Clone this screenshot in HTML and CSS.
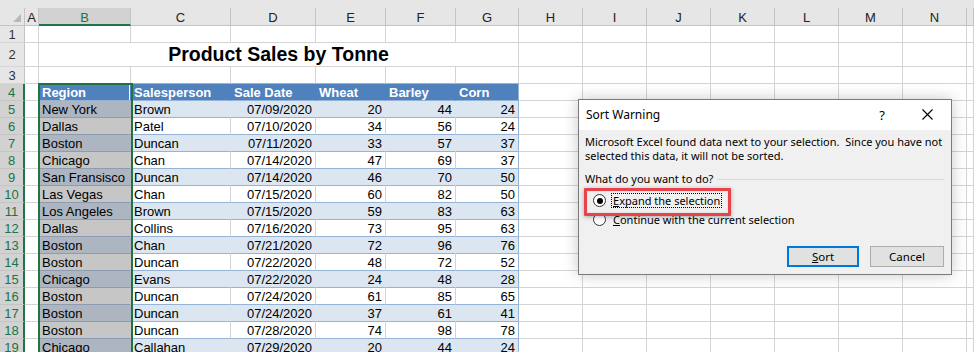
FILE: index.html
```html
<!DOCTYPE html>
<html>
<head>
<meta charset="utf-8">
<link rel="stylesheet" href="styles.css">
</head>
<body>
<div class="sheet">
  <div class="topstrip"></div>
  <div class="row hdr">
    <div class="cell corner"><span class="tri"></span></div>
    <div class="cell">A</div>
    <div class="cell hsel">B</div>
    <div class="cell">C</div>
    <div class="cell">D</div>
    <div class="cell">E</div>
    <div class="cell">F</div>
    <div class="cell">G</div>
    <div class="cell">H</div>
    <div class="cell">I</div>
    <div class="cell">J</div>
    <div class="cell">K</div>
    <div class="cell">L</div>
    <div class="cell">M</div>
    <div class="cell">N</div>
    <div class="cell"></div>
  </div>
  <div class="row">
    <div class="cell rh">1</div>
    <div class="cell"></div><div class="cell"></div><div class="cell"></div><div class="cell"></div><div class="cell"></div><div class="cell"></div><div class="cell"></div><div class="cell"></div><div class="cell"></div><div class="cell"></div><div class="cell"></div><div class="cell"></div><div class="cell"></div><div class="cell"></div><div class="cell"></div>
  </div>
  <div class="row tall">
    <div class="cell rh">2</div>
    <div class="cell"></div>
    <div class="cell title">Product Sales by Tonne</div>
    <div class="cell"></div><div class="cell"></div><div class="cell"></div><div class="cell"></div><div class="cell"></div><div class="cell"></div><div class="cell"></div><div class="cell"></div>
  </div>
  <div class="row">
    <div class="cell rh">3</div>
    <div class="cell"></div><div class="cell abv"></div><div class="cell abv"></div><div class="cell abv"></div><div class="cell abv"></div><div class="cell abv"></div><div class="cell abv"></div><div class="cell"></div><div class="cell"></div><div class="cell"></div><div class="cell"></div><div class="cell"></div><div class="cell"></div><div class="cell"></div><div class="cell"></div>
  </div>
  <div class="row">
    <div class="cell rh sel">4</div>
    <div class="cell"></div>
    <div class="cell th active">Region</div>
    <div class="cell th">Salesperson</div>
    <div class="cell th">Sale Date</div>
    <div class="cell th">Wheat</div>
    <div class="cell th">Barley</div>
    <div class="cell th last">Corn</div>
    <div class="cell"></div><div class="cell"></div><div class="cell"></div><div class="cell"></div><div class="cell"></div><div class="cell"></div><div class="cell"></div><div class="cell"></div>
  </div>
  <div class="row">
    <div class="cell rh sel">5</div><div class="cell"></div>
    <div class="cell selb">New York</div><div class="cell band">Brown</div><div class="cell band num">07/09/2020</div><div class="cell band num">20</div><div class="cell band num">44</div><div class="cell band num last">24</div>
    <div class="cell"></div><div class="cell"></div><div class="cell"></div><div class="cell"></div><div class="cell"></div><div class="cell"></div><div class="cell"></div><div class="cell"></div>
  </div>
  <div class="row">
    <div class="cell rh sel">6</div><div class="cell"></div>
    <div class="cell selw">Dallas</div><div class="cell plain">Patel</div><div class="cell plain num">07/10/2020</div><div class="cell plain num">34</div><div class="cell plain num">56</div><div class="cell plain num last">24</div>
    <div class="cell"></div><div class="cell"></div><div class="cell"></div><div class="cell"></div><div class="cell"></div><div class="cell"></div><div class="cell"></div><div class="cell"></div>
  </div>
  <div class="row">
    <div class="cell rh sel">7</div><div class="cell"></div>
    <div class="cell selb">Boston</div><div class="cell band">Duncan</div><div class="cell band num">07/11/2020</div><div class="cell band num">33</div><div class="cell band num">57</div><div class="cell band num last">37</div>
    <div class="cell"></div><div class="cell"></div><div class="cell"></div><div class="cell"></div><div class="cell"></div><div class="cell"></div><div class="cell"></div><div class="cell"></div>
  </div>
  <div class="row">
    <div class="cell rh sel">8</div><div class="cell"></div>
    <div class="cell selw">Chicago</div><div class="cell plain">Chan</div><div class="cell plain num">07/14/2020</div><div class="cell plain num">47</div><div class="cell plain num">69</div><div class="cell plain num last">37</div>
    <div class="cell"></div><div class="cell"></div><div class="cell"></div><div class="cell"></div><div class="cell"></div><div class="cell"></div><div class="cell"></div><div class="cell"></div>
  </div>
  <div class="row">
    <div class="cell rh sel">9</div><div class="cell"></div>
    <div class="cell selb">San Fransisco</div><div class="cell band">Duncan</div><div class="cell band num">07/14/2020</div><div class="cell band num">46</div><div class="cell band num">70</div><div class="cell band num last">50</div>
    <div class="cell"></div><div class="cell"></div><div class="cell"></div><div class="cell"></div><div class="cell"></div><div class="cell"></div><div class="cell"></div><div class="cell"></div>
  </div>
  <div class="row">
    <div class="cell rh sel">10</div><div class="cell"></div>
    <div class="cell selw">Las Vegas</div><div class="cell plain">Chan</div><div class="cell plain num">07/15/2020</div><div class="cell plain num">60</div><div class="cell plain num">82</div><div class="cell plain num last">50</div>
    <div class="cell"></div><div class="cell"></div><div class="cell"></div><div class="cell"></div><div class="cell"></div><div class="cell"></div><div class="cell"></div><div class="cell"></div>
  </div>
  <div class="row">
    <div class="cell rh sel">11</div><div class="cell"></div>
    <div class="cell selb">Los Angeles</div><div class="cell band">Brown</div><div class="cell band num">07/15/2020</div><div class="cell band num">59</div><div class="cell band num">83</div><div class="cell band num last">63</div>
    <div class="cell"></div><div class="cell"></div><div class="cell"></div><div class="cell"></div><div class="cell"></div><div class="cell"></div><div class="cell"></div><div class="cell"></div>
  </div>
  <div class="row">
    <div class="cell rh sel">12</div><div class="cell"></div>
    <div class="cell selw">Dallas</div><div class="cell plain">Collins</div><div class="cell plain num">07/16/2020</div><div class="cell plain num">73</div><div class="cell plain num">95</div><div class="cell plain num last">63</div>
    <div class="cell"></div><div class="cell"></div><div class="cell"></div><div class="cell"></div><div class="cell"></div><div class="cell"></div><div class="cell"></div><div class="cell"></div>
  </div>
  <div class="row">
    <div class="cell rh sel">13</div><div class="cell"></div>
    <div class="cell selb">Boston</div><div class="cell band">Chan</div><div class="cell band num">07/21/2020</div><div class="cell band num">72</div><div class="cell band num">96</div><div class="cell band num last">76</div>
    <div class="cell"></div><div class="cell"></div><div class="cell"></div><div class="cell"></div><div class="cell"></div><div class="cell"></div><div class="cell"></div><div class="cell"></div>
  </div>
  <div class="row">
    <div class="cell rh sel">14</div><div class="cell"></div>
    <div class="cell selw">Boston</div><div class="cell plain">Duncan</div><div class="cell plain num">07/22/2020</div><div class="cell plain num">48</div><div class="cell plain num">72</div><div class="cell plain num last">52</div>
    <div class="cell"></div><div class="cell"></div><div class="cell"></div><div class="cell"></div><div class="cell"></div><div class="cell"></div><div class="cell"></div><div class="cell"></div>
  </div>
  <div class="row">
    <div class="cell rh sel">15</div><div class="cell"></div>
    <div class="cell selb">Chicago</div><div class="cell band">Evans</div><div class="cell band num">07/22/2020</div><div class="cell band num">24</div><div class="cell band num">48</div><div class="cell band num last">28</div>
    <div class="cell"></div><div class="cell"></div><div class="cell"></div><div class="cell"></div><div class="cell"></div><div class="cell"></div><div class="cell"></div><div class="cell"></div>
  </div>
  <div class="row">
    <div class="cell rh sel">16</div><div class="cell"></div>
    <div class="cell selw">Boston</div><div class="cell plain">Duncan</div><div class="cell plain num">07/24/2020</div><div class="cell plain num">61</div><div class="cell plain num">85</div><div class="cell plain num last">65</div>
    <div class="cell"></div><div class="cell"></div><div class="cell"></div><div class="cell"></div><div class="cell"></div><div class="cell"></div><div class="cell"></div><div class="cell"></div>
  </div>
  <div class="row">
    <div class="cell rh sel">17</div><div class="cell"></div>
    <div class="cell selb">Boston</div><div class="cell band">Duncan</div><div class="cell band num">07/24/2020</div><div class="cell band num">37</div><div class="cell band num">61</div><div class="cell band num last">41</div>
    <div class="cell"></div><div class="cell"></div><div class="cell"></div><div class="cell"></div><div class="cell"></div><div class="cell"></div><div class="cell"></div><div class="cell"></div>
  </div>
  <div class="row">
    <div class="cell rh sel">18</div><div class="cell"></div>
    <div class="cell selw">Boston</div><div class="cell plain">Duncan</div><div class="cell plain num">07/28/2020</div><div class="cell plain num">74</div><div class="cell plain num">98</div><div class="cell plain num last">78</div>
    <div class="cell"></div><div class="cell"></div><div class="cell"></div><div class="cell"></div><div class="cell"></div><div class="cell"></div><div class="cell"></div><div class="cell"></div>
  </div>
  <div class="row">
    <div class="cell rh sel">19</div><div class="cell"></div>
    <div class="cell selb">Chicago</div><div class="cell band">Callahan</div><div class="cell band num">07/29/2020</div><div class="cell band num">20</div><div class="cell band num">44</div><div class="cell band num last">24</div>
    <div class="cell"></div><div class="cell"></div><div class="cell"></div><div class="cell"></div><div class="cell"></div><div class="cell"></div><div class="cell"></div><div class="cell"></div>
  </div>

  <div class="selection"></div>

  <div class="dialog">
    <div class="titlebar">
      <span class="dtitle">Sort Warning</span>
      <span class="tbtn">?</span>
      <span class="tbtn close"><svg width="11" height="11" viewBox="0 0 11 11"><path d="M0.5 0.5 L10.5 10.5 M10.5 0.5 L0.5 10.5" stroke="#000" stroke-width="1.1" fill="none"/></svg></span>
    </div>
    <div class="dbody">
      <p class="msg">Microsoft Excel found data next to your selection.&nbsp; Since you have not<br>selected this data, it will not be sorted.</p>
      <div class="group"><span>What do you want to do?</span><span class="gline"></span></div>
      <div class="radio first"><span class="rb on"></span><span class="rlabel focus"><u>E</u>xpand the selection</span></div>
      <div class="radio"><span class="rb"></span><span class="rlabel"><u>C</u>ontinue with the current selection</span></div>
      <div class="buttons">
        <button class="btn default"><u>S</u>ort</button>
        <button class="btn cancel">Cancel</button>
      </div>
    </div>
    <div class="callout"></div>
  </div>
</div>
</body>
</html>
```

FILE: styles.css
```css
html, body {
  margin: 0;
  padding: 0;
  background: #fff;
  overflow: hidden;
}
.sheet {
  position: relative;
  width: 974px;
  height: 352px;
  overflow: hidden;
  background: #fff;
  font-family: "Liberation Sans", Arial, sans-serif;
}
.topstrip {
  height: 8px;
  background: #e6e6e6;
}
.row {
  display: grid;
  grid-template-columns: 25px 14px 92px 100px 85px 70px 70px 63px repeat(7, 64px) 1fr;
  height: 17px;
}
.row.tall {
  height: 24px;
}
.cell {
  box-sizing: border-box;
  border-right: 1px solid #d4d4d4;
  border-bottom: 1px solid #d4d4d4;
  font-size: 13px;
  line-height: 15px;
  padding: 1px 3px 0;
  white-space: nowrap;
  overflow: hidden;
  color: #000;
}
.hdr {
  height: 18px;
}
.hdr .cell {
  background: #e6e6e6;
  border-right-color: #c4c4c4;
  border-bottom-color: #c4c4c4;
  text-align: center;
  color: #222;
  font-size: 13px;
  line-height: 18px;
  padding: 1px 0 0;
}
.hdr .cell.hsel {
  background: #d2d2d2;
  color: #217346;
  border-bottom: 2px solid #217346;
  line-height: 17px;
}
.hdr .corner {
  position: relative;
}
.tri {
  position: absolute;
  right: 3px;
  bottom: 3px;
  width: 0;
  height: 0;
  border-left: 8px solid transparent;
  border-bottom: 8px solid #b8b8b8;
}
.cell.rh {
  background: #e6e6e6;
  border-right-color: #c4c4c4;
  border-bottom-color: #d6d6d6;
  text-align: center;
  color: #333;
  font-size: 13px;
  padding: 1px 0 0;
}
.cell.rh.sel {
  background: #d2d2d2;
  color: #217346;
  border-right: 2px solid #217346;
  border-bottom-color: #c4c4c4;
}
.tall .cell {
  line-height: 22px;
}
.cell.title {
  grid-column: 3 / 9;
  text-align: center;
  font-weight: bold;
  font-size: 19.5px;
  line-height: 23px;
  padding: 0 3px;
  overflow: visible;
}
.cell.abv {
  border-bottom-color: #95b3d7;
}
.cell.th {
  background: #4f81bd;
  color: #fff;
  font-weight: bold;
  border-right-color: #4f81bd;
  border-bottom-color: #95b3d7;
}
.cell.th.active {
  box-shadow: inset 1px 1px 0 #fff, inset -1px 0 0 #fff;
}
.cell.band {
  background: #dce6f1;
  border-right-color: #dce6f1;
  border-bottom-color: #95b3d7;
}
.cell.plain {
  border-bottom-color: #95b3d7;
}
.cell.last {
  border-right-color: #95b3d7;
}
.cell.num {
  text-align: right;
}
.cell.selb {
  background: #adb5c0;
  border-right-color: #adb5c0;
  border-bottom-color: #8d9cb0;
}
.cell.selw {
  background: #c6c6c6;
  border-right-color: #c6c6c6;
  border-bottom-color: #8d9cb0;
}
.selection {
  position: absolute;
  left: 38px;
  top: 83px;
  width: 95px;
  height: 300px;
  box-sizing: border-box;
  border: 2px solid #217346;
  pointer-events: none;
}

/* Dialog */
.dialog {
  position: absolute;
  left: 578px;
  top: 99px;
  width: 374px;
  height: 176px;
  box-sizing: border-box;
  border: 1px solid #7a7a7a;
  background: #f0f0f0;
  box-shadow: 0 0 14px rgba(0, 0, 0, 0.22);
  display: flex;
  flex-direction: column;
  font-family: "Noto Sans", "Open Sans", sans-serif;
  font-size: 11px;
  color: #000;
}
.titlebar {
  height: 30px;
  flex: none;
  background: #fff;
  display: flex;
  align-items: center;
  padding-left: 7px;
  padding-bottom: 1px;
  box-sizing: border-box;
}
.dtitle {
  flex: 1;
  font-size: 12px;
}
.tbtn {
  width: 46px;
  text-align: center;
  font-size: 13px;
  display: flex;
  justify-content: center;
  align-items: center;
}
.tbtn.close {
  width: 44px;
  margin-right: 2px;
}
.dbody {
  flex: 1;
  display: flex;
  flex-direction: column;
  padding: 5px 7px 7px 6px;
}
.msg {
  margin: 0;
  line-height: 14px;
}
.group {
  display: flex;
  align-items: center;
  margin-top: 9px;
  line-height: 14px;
}
.gline {
  flex: 1;
  height: 1px;
  background: #dadada;
  margin-left: 4px;
  margin-top: 1px;
}
.radio {
  display: flex;
  align-items: center;
  height: 19px;
  flex: none;
  padding-left: 8px;
}
.radio.first {
  margin-top: 5px;
}
.rb {
  width: 13px;
  height: 13px;
  box-sizing: border-box;
  border: 1px solid #333;
  border-radius: 50%;
  background: #fff;
  margin-right: 5px;
  position: relative;
}
.rb.on::after {
  content: "";
  position: absolute;
  left: 2.5px;
  top: 2.5px;
  width: 6px;
  height: 6px;
  border-radius: 50%;
  background: #000;
}
.rlabel {
  padding: 0 1px;
  border: 1px dotted transparent;
  line-height: 13px;
}
.rlabel.focus {
  border-color: #000;
}
.buttons {
  margin-top: auto;
  display: flex;
  justify-content: flex-end;
  gap: 11px;
}
.btn {
  font-family: "Noto Sans", "Open Sans", sans-serif;
  font-size: 11.5px;
  height: 21px;
  box-sizing: border-box;
  background: #e1e1e1;
  border: 1px solid #adadad;
  padding: 0;
  color: #000;
}
.btn.default {
  width: 72px;
  border: 2px solid #0078d7;
}
.btn.cancel {
  width: 74px;
}
.callout {
  position: absolute;
  left: 5px;
  top: 88px;
  width: 147px;
  height: 28px;
  box-sizing: border-box;
  border: 3px solid #e8434b;
  border-radius: 1px;
  box-shadow: 0 1px 4px rgba(0, 0, 0, 0.3), inset 0 0 2px rgba(0, 0, 0, 0.15);
  pointer-events: none;
}
```
